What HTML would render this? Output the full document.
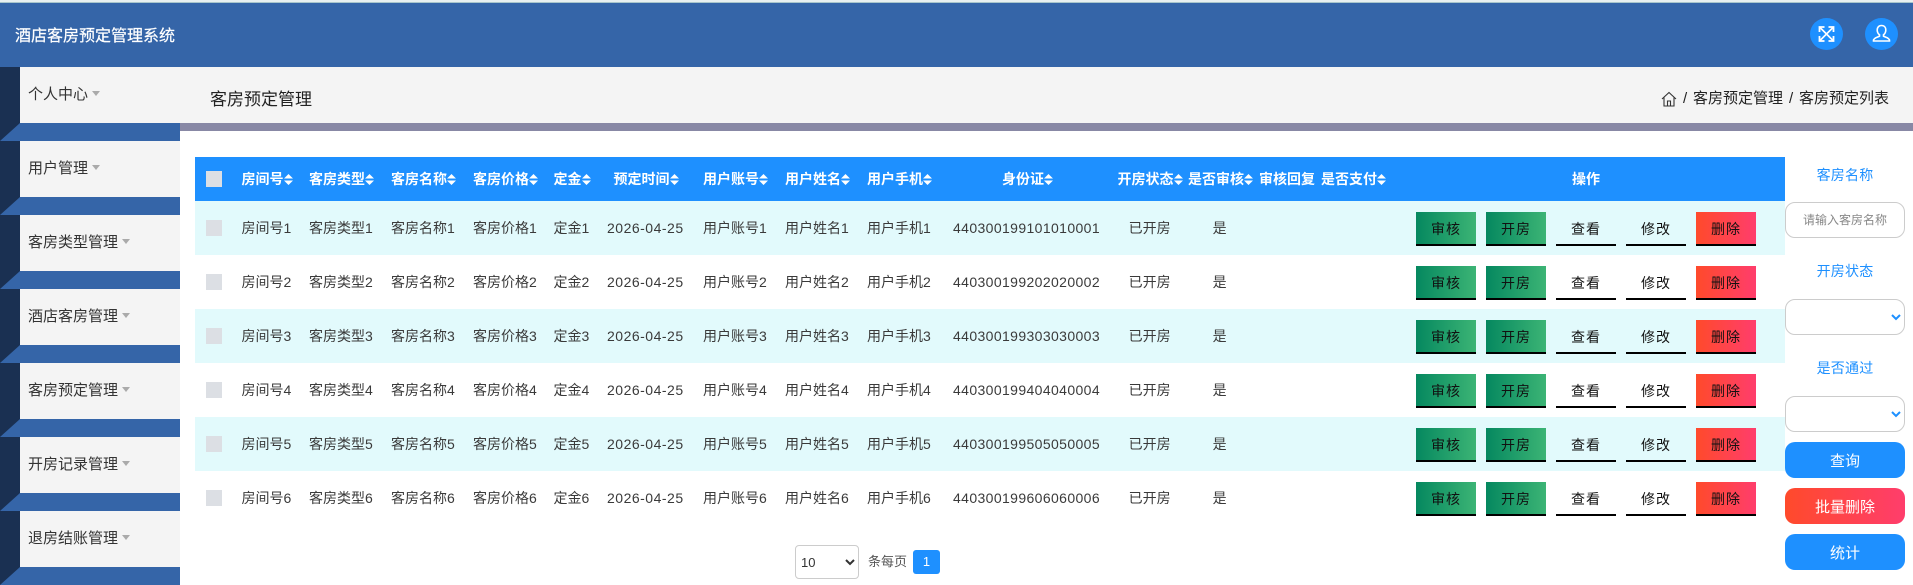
<!DOCTYPE html>
<html lang="zh-CN">
<head>
<meta charset="utf-8">
<title>酒店客房预定管理系统</title>
<style>
*{box-sizing:border-box;margin:0;padding:0}
html,body{width:1913px;height:585px;overflow:hidden;background:#fff}
body{position:relative;font-family:"Liberation Sans","Noto Sans CJK SC",sans-serif;font-size:14px;color:#333}
.a{position:absolute}
#top{left:0;top:0;width:1913px;height:3px;background:linear-gradient(#e8f0f0,#e8f0f0 2px,#a8c6cc 2px)}
#hd{left:0;top:3px;width:1913px;height:64px;background:#3565a8}
#ttl{left:15px;top:27px;font-size:16px;line-height:20px;color:#fff;white-space:nowrap;-webkit-text-stroke:.2px #fff}
.circ{top:18px;width:33px;height:32px;border-radius:50%;background:#1e90ff}
.circ svg{display:block}
#strip{left:0;top:67px;width:20px;height:518px;background:#1a3052}
.mi{left:20px;width:160px;height:56px;background:#f4f4f4}
.mi span{position:absolute;left:8px;top:17px;font-size:15px;line-height:22px;color:#333;white-space:nowrap}
.mi i{position:absolute;top:24px;width:0;height:0;border-left:4.5px solid transparent;border-right:4.5px solid transparent;border-top:5px solid #aaa}
.bar{left:0;width:180px;height:18px;background:#3565a8;clip-path:polygon(20px 0,180px 0,180px 18px,0 18px)}
#crumb{left:180px;top:67px;width:1733px;height:56px;background:#f4f4f4}
#line{left:180px;top:123px;width:1733px;height:8px;background:#8888a5}
#pt{left:210px;top:88px;font-size:17px;line-height:24px;color:#222;white-space:nowrap}
.bc{top:88px;font-size:15px;line-height:22px;color:#222;white-space:nowrap}
#th{left:195px;top:157px;width:1590px;height:44px;background:#1e90ff}
.r{position:absolute;left:195px;width:1590px;height:54px;background:#fff}
.o{background:#e2fafc}
.c{position:absolute;top:0;line-height:54px;white-space:nowrap;color:#3a3a3a}
.h{position:absolute;top:0;line-height:44px;white-space:nowrap;color:#fff;font-weight:700}
.h svg{display:inline-block;vertical-align:-1px;margin-left:0}
.ck{position:absolute;left:11px;width:16px;height:16px;background:#dcdfe4}
.d{letter-spacing:.5px}
.id{letter-spacing:.38px}
.c1{left:46.5px}.c2{left:114px}.c3{left:196px}.c4{left:278px}.c5{left:358.5px}.c6{left:412px}.c7{left:508px}.c8{left:590px}.c9{left:672px}.c10{left:758px}.c11{left:933.6px}.c12{left:1017.6px}
.b{position:absolute;top:11px;width:60px;height:34px;border:0;border-bottom:2px solid #000;font-size:14px;line-height:34px;letter-spacing:1px;text-align:center;color:#111;background:transparent}
.g{background:linear-gradient(90deg,#05885f,#3cb475)}
.x{background:linear-gradient(90deg,#ff4a2b,#ff3d6c)}
.b1{left:1221px}.b2{left:1291px}.b3{left:1361px}.b4{left:1431px}.b5{left:1501px}
.lb{left:1785px;width:120px;text-align:center;font-size:14px;line-height:20px;letter-spacing:.2px;color:#1e90ff}
.ip{left:1785px;width:120px;height:36px;border:1px solid #ccc;border-radius:10px;background:#fff;text-align:center;font-size:12px;line-height:35px;color:#888}
select{font-family:"Liberation Sans","Noto Sans CJK SC",sans-serif}
.sel{left:1785px;width:120px;height:36px;border:1px solid #ccc;border-radius:10px;background:#fff;color:#1e90ff;font-size:14px}
.btn{left:1785px;width:120px;height:36px;border-radius:10px;text-align:center;color:#fff;font-size:15px;line-height:39px;background:#1e90ff}
#ps{left:795px;top:545px;width:64px;height:34px;border:1px solid #ccc;border-radius:4px;background:#fff;color:#333;font-size:13px;padding-left:1px}
#pl{left:868px;top:552px;font-size:13px;line-height:20px;color:#555;white-space:nowrap}
#pn{left:913px;top:550px;width:27px;height:24px;border-radius:3px;background:#1e90ff;color:#fff;font-size:13px;line-height:24px;text-align:center}
</style>
</head>
<body>
<div class="a" id="top"></div>
<div class="a" id="hd"></div>
<div class="a" id="ttl">酒店客房预定管理系统</div>
<div class="a circ" style="left:1810px"><svg width="33" height="32" viewBox="0 0 33 32" fill="none" stroke="#fff" stroke-width="1.6"><path d="M10 9.5l13 13M23 9.5l-13 13"/><path d="M9.5 14V9h5M18.5 9h5v5M23.5 18v5h-5M14.5 23h-5v-5" stroke-width="1.8"/></svg></div>
<div class="a circ" style="left:1865px"><svg width="33" height="32" viewBox="0 0 33 32" fill="none" stroke="#fff" stroke-width="1.6"><path d="M16.5 7.5c-2.8 0-4.3 2-4.3 4.5 0 2.2 1 3.8 2.3 4.8v1.4c-1.5 1-6 1.6-6 4.3v.5h16v-.5c0-2.7-4.500-3.300-6-4.300v-1.400c1.300-1 2.300-2.600 2.300-4.800 0-2.500-1.500-4.500-4.300-4.500z"/></svg></div>

<div class="a" id="strip"></div>
<div class="a mi" style="top:67px"><span>个人中心</span><i style="left:72px"></i></div>
<div class="a bar" style="top:123px"></div>
<div class="a mi" style="top:141px"><span>用户管理</span><i style="left:72px"></i></div>
<div class="a bar" style="top:197px"></div>
<div class="a mi" style="top:215px"><span>客房类型管理</span><i style="left:102px"></i></div>
<div class="a bar" style="top:271px"></div>
<div class="a mi" style="top:289px"><span>酒店客房管理</span><i style="left:102px"></i></div>
<div class="a bar" style="top:345px"></div>
<div class="a mi" style="top:363px"><span>客房预定管理</span><i style="left:102px"></i></div>
<div class="a bar" style="top:419px"></div>
<div class="a mi" style="top:437px"><span>开房记录管理</span><i style="left:102px"></i></div>
<div class="a bar" style="top:493px"></div>
<div class="a mi" style="top:511px"><span>退房结账管理</span><i style="left:102px"></i></div>
<div class="a bar" style="top:567px"></div>

<div class="a" id="crumb"></div>
<div class="a" id="line"></div>
<div class="a" id="pt">客房预定管理</div>
<svg class="a" style="left:1661px;top:91px" width="16" height="16" viewBox="0 0 16 16" fill="none" stroke="#333" stroke-width="1.1"><path d="M1 8L8 1.500 15 8M3 6.500V15h10V6.500M6.500 15v-5h3v5"/></svg>
<div class="a bc" style="left:1683px">/</div>
<div class="a bc" style="left:1693px">客房预定管理</div>
<div class="a bc" style="left:1789px">/</div>
<div class="a bc" style="left:1799px">客房预定列表</div>

<div class="a" id="th">
<div class="ck" style="top:14px"></div>
<span class="h c1">房间号<svg width="9" height="11" viewBox="0 0 9 11" fill="#fff"><path d="M4.500 0L9 4.500H0zM4.500 11L0 6.500h9z"/></svg></span>
<span class="h c2">客房类型<svg width="9" height="11" viewBox="0 0 9 11" fill="#fff"><path d="M4.500 0L9 4.500H0zM4.500 11L0 6.500h9z"/></svg></span>
<span class="h c3">客房名称<svg width="9" height="11" viewBox="0 0 9 11" fill="#fff"><path d="M4.500 0L9 4.500H0zM4.500 11L0 6.500h9z"/></svg></span>
<span class="h c4">客房价格<svg width="9" height="11" viewBox="0 0 9 11" fill="#fff"><path d="M4.500 0L9 4.500H0zM4.500 11L0 6.500h9z"/></svg></span>
<span class="h c5">定金<svg width="9" height="11" viewBox="0 0 9 11" fill="#fff"><path d="M4.500 0L9 4.500H0zM4.500 11L0 6.500h9z"/></svg></span>
<span class="h" style="left:418.500px">预定时间<svg width="9" height="11" viewBox="0 0 9 11" fill="#fff"><path d="M4.500 0L9 4.500H0zM4.500 11L0 6.500h9z"/></svg></span>
<span class="h c7">用户账号<svg width="9" height="11" viewBox="0 0 9 11" fill="#fff"><path d="M4.500 0L9 4.500H0zM4.500 11L0 6.500h9z"/></svg></span>
<span class="h c8">用户姓名<svg width="9" height="11" viewBox="0 0 9 11" fill="#fff"><path d="M4.500 0L9 4.500H0zM4.500 11L0 6.500h9z"/></svg></span>
<span class="h c9">用户手机<svg width="9" height="11" viewBox="0 0 9 11" fill="#fff"><path d="M4.500 0L9 4.500H0zM4.500 11L0 6.500h9z"/></svg></span>
<span class="h" style="left:807px">身份证<svg width="9" height="11" viewBox="0 0 9 11" fill="#fff"><path d="M4.500 0L9 4.500H0zM4.500 11L0 6.500h9z"/></svg></span>
<span class="h" style="left:922.500px">开房状态<svg width="9" height="11" viewBox="0 0 9 11" fill="#fff"><path d="M4.500 0L9 4.500H0zM4.500 11L0 6.500h9z"/></svg></span>
<span class="h" style="left:993px">是否审核<svg width="9" height="11" viewBox="0 0 9 11" fill="#fff"><path d="M4.500 0L9 4.500H0zM4.500 11L0 6.500h9z"/></svg></span>
<span class="h" style="left:1064px">审核回复</span>
<span class="h" style="left:1126px">是否支付<svg width="9" height="11" viewBox="0 0 9 11" fill="#fff"><path d="M4.500 0L9 4.500H0zM4.500 11L0 6.500h9z"/></svg></span>
<span class="h" style="left:1377px">操作</span>
</div>

<div class="r o" style="top:201px"><div class="ck" style="top:19px"></div><span class="c c1">房间号1</span><span class="c c2">客房类型1</span><span class="c c3">客房名称1</span><span class="c c4">客房价格1</span><span class="c c5">定金1</span><span class="c c6 d">2026-04-25</span><span class="c c7">用户账号1</span><span class="c c8">用户姓名1</span><span class="c c9">用户手机1</span><span class="c c10 id">440300199101010001</span><span class="c c11">已开房</span><span class="c c12">是</span><div class="b g b1">审核</div><div class="b g b2">开房</div><div class="b b3">查看</div><div class="b b4">修改</div><div class="b x b5">删除</div></div>
<div class="r" style="top:255px"><div class="ck" style="top:19px"></div><span class="c c1">房间号2</span><span class="c c2">客房类型2</span><span class="c c3">客房名称2</span><span class="c c4">客房价格2</span><span class="c c5">定金2</span><span class="c c6 d">2026-04-25</span><span class="c c7">用户账号2</span><span class="c c8">用户姓名2</span><span class="c c9">用户手机2</span><span class="c c10 id">440300199202020002</span><span class="c c11">已开房</span><span class="c c12">是</span><div class="b g b1">审核</div><div class="b g b2">开房</div><div class="b b3">查看</div><div class="b b4">修改</div><div class="b x b5">删除</div></div>
<div class="r o" style="top:309px"><div class="ck" style="top:19px"></div><span class="c c1">房间号3</span><span class="c c2">客房类型3</span><span class="c c3">客房名称3</span><span class="c c4">客房价格3</span><span class="c c5">定金3</span><span class="c c6 d">2026-04-25</span><span class="c c7">用户账号3</span><span class="c c8">用户姓名3</span><span class="c c9">用户手机3</span><span class="c c10 id">440300199303030003</span><span class="c c11">已开房</span><span class="c c12">是</span><div class="b g b1">审核</div><div class="b g b2">开房</div><div class="b b3">查看</div><div class="b b4">修改</div><div class="b x b5">删除</div></div>
<div class="r" style="top:363px"><div class="ck" style="top:19px"></div><span class="c c1">房间号4</span><span class="c c2">客房类型4</span><span class="c c3">客房名称4</span><span class="c c4">客房价格4</span><span class="c c5">定金4</span><span class="c c6 d">2026-04-25</span><span class="c c7">用户账号4</span><span class="c c8">用户姓名4</span><span class="c c9">用户手机4</span><span class="c c10 id">440300199404040004</span><span class="c c11">已开房</span><span class="c c12">是</span><div class="b g b1">审核</div><div class="b g b2">开房</div><div class="b b3">查看</div><div class="b b4">修改</div><div class="b x b5">删除</div></div>
<div class="r o" style="top:417px"><div class="ck" style="top:19px"></div><span class="c c1">房间号5</span><span class="c c2">客房类型5</span><span class="c c3">客房名称5</span><span class="c c4">客房价格5</span><span class="c c5">定金5</span><span class="c c6 d">2026-04-25</span><span class="c c7">用户账号5</span><span class="c c8">用户姓名5</span><span class="c c9">用户手机5</span><span class="c c10 id">440300199505050005</span><span class="c c11">已开房</span><span class="c c12">是</span><div class="b g b1">审核</div><div class="b g b2">开房</div><div class="b b3">查看</div><div class="b b4">修改</div><div class="b x b5">删除</div></div>
<div class="r" style="top:471px"><div class="ck" style="top:19px"></div><span class="c c1">房间号6</span><span class="c c2">客房类型6</span><span class="c c3">客房名称6</span><span class="c c4">客房价格6</span><span class="c c5">定金6</span><span class="c c6 d">2026-04-25</span><span class="c c7">用户账号6</span><span class="c c8">用户姓名6</span><span class="c c9">用户手机6</span><span class="c c10 id">440300199606060006</span><span class="c c11">已开房</span><span class="c c12">是</span><div class="b g b1">审核</div><div class="b g b2">开房</div><div class="b b3">查看</div><div class="b b4">修改</div><div class="b x b5">删除</div></div>

<div class="a lb" style="top:165px">客房名称</div>
<div class="a ip" style="top:202px">请输入客房名称</div>
<div class="a lb" style="top:261px">开房状态</div>
<select class="a sel" style="top:299px"><option></option></select>
<div class="a lb" style="top:358px">是否通过</div>
<select class="a sel" style="top:396px"><option></option></select>
<div class="a btn" style="top:442px">查询</div>
<div class="a btn" style="top:488px;background:linear-gradient(90deg,#ff4a2b,#ff3d6c)">批量删除</div>
<div class="a btn" style="top:534px">统计</div>

<select class="a" id="ps"><option>10</option></select>
<div class="a" id="pl">条每页</div>
<div class="a" id="pn">1</div>
</body>
</html>
